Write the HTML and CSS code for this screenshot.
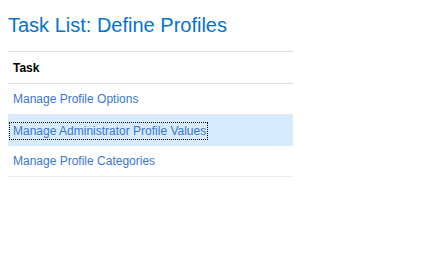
FILE: index.html
```html
<!DOCTYPE html>
<html lang="en">
<head>
    <meta charset="UTF-8">
    <title>Task List: Define Profiles</title>
    <link rel="stylesheet" href="styles.css">
</head>
<body>
<h1 class="title">Task List: Define Profiles</h1>

<table class="tasks">
    <thead>
    <tr><th>Task</th></tr>
    </thead>
    <tbody>
    <tr><td><a href="#">Manage Profile Options</a></td></tr>
    <tr class="selected"><td><a href="#" class="focus">Manage Administrator Profile Values</a></td></tr>
    <tr class="last"><td><a href="#">Manage Profile Categories</a></td></tr>
    </tbody>
</table>
</body>
</html>
```

FILE: styles.css
```css
html, body {
    margin: 0;
    padding: 0;
}
body {
    padding: 0 8px;
    font-family: "Liberation Sans", Arial, sans-serif;
    background: #fff;
}
.title {
    font-size: 20px;
    font-weight: normal;
    color: #0572ce;
    margin: 0;
    padding-top: 13px;
    line-height: 24px;
    height: 38px;
}
.tasks {
    width: 285px;
    border-collapse: collapse;
    border-top: 1px solid #d6dfe6;
    font-size: 12px;
}
.tasks th {
    text-align: left;
    font-weight: bold;
    color: #000;
    height: 31px;
    padding: 0 5px;
    border-bottom: 1px solid #d6dfe6;
}
.tasks td {
    height: 30px;
    padding: 0 5px;
    border-bottom: 1px solid #e4e8ec;
}
.tasks tr.selected td {
    background: #d6ecfc;
    border-bottom: none;
    height: 31px;
}
.tasks tr.last td {
    border-bottom: 1px solid #ebebeb;
}
.tasks a {
    color: #3a76d1;
    text-decoration: none;
}
.tasks a.focus {
    outline: 1px dotted #000;
    outline-offset: 1px;
    margin-left: -2px;
    padding-left: 2px;
}
```
